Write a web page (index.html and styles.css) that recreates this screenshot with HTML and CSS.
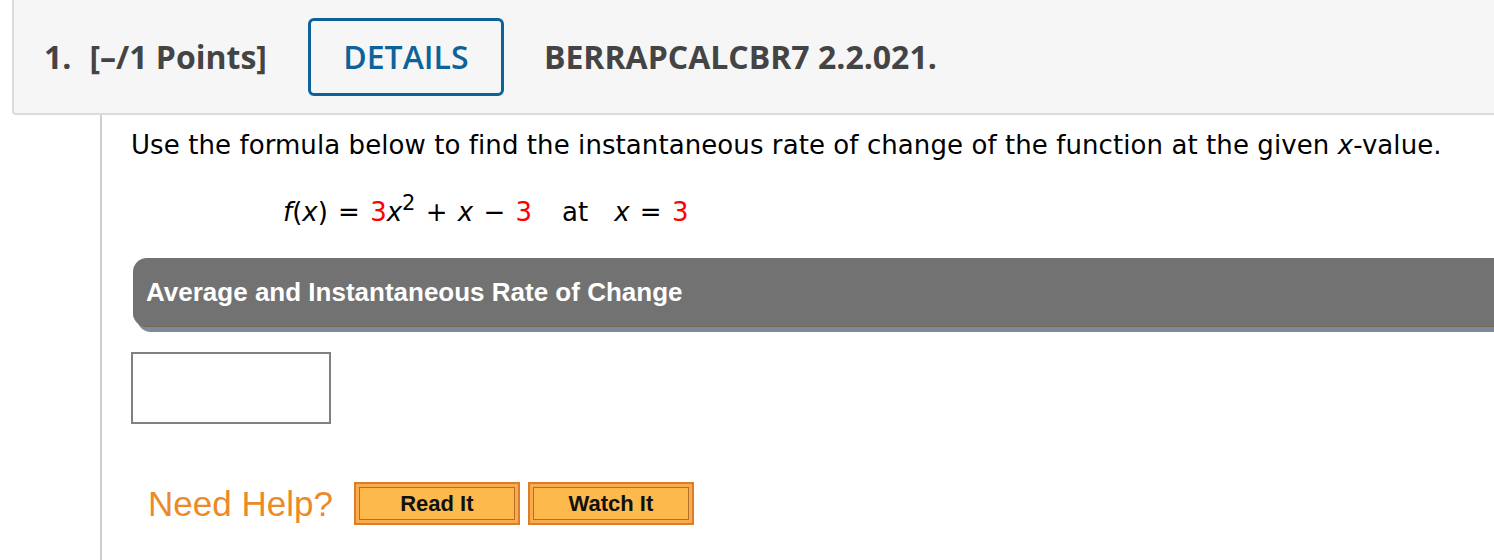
FILE: index.html
```html
<!DOCTYPE html>
<html>
<head>
<meta charset="utf-8">
<link rel="stylesheet" href="styles.css">
</head>
<body>
<div class="header">
  <span class="qnum">1.</span>
  <span class="points">[–/1 Points]</span>
  <span class="details">DETAILS</span>
  <span class="code">BERRAPCALCBR7 2.2.021.</span>
</div>
<div class="content">
  <p class="prompt">Use the formula below to find the instantaneous rate of change of the function at the given <i>x</i>-value.</p>
  <p class="formula"><i>f</i>(<i>x</i>) = <span class="red">3</span><i>x</i><sup>2</sup> + <i>x</i> − <span class="red">3</span><span class="at">at</span><i>x</i> = <span class="red">3</span></p>
  <div class="bar"><span>Average and Instantaneous Rate of Change</span></div>
  <div class="answer"></div>
  <div class="help">
    <span class="need">Need Help?</span>
    <span class="btn">Read It</span>
    <span class="btn">Watch It</span>
  </div>
</div>
</body>
</html>
```
FILE: styles.css
```css
html, body {
  margin: 0;
  padding: 0;
  background: #fff;
}
body {
  width: 1494px;
  height: 560px;
  overflow: hidden;
}
.header {
  margin-left: 12px;
  height: 113px;
  background: #f6f6f6;
  border-left: 2px solid #dcdcdc;
  border-bottom: 2px solid #dcdcdc;
  border-bottom-left-radius: 4px;
  display: flex;
  align-items: center;
  padding-left: 30px;
  box-sizing: content-box;
  font-family: "Open Sans", sans-serif;
  font-weight: 700;
  color: #444;
}
.qnum {
  font-size: 32px;
  margin-right: 18px;
}
.points {
  font-size: 32px;
}
.details {
  margin-left: 41px;
  width: 190px;
  height: 72px;
  border: 3px solid #0d6399;
  border-radius: 6px;
  display: flex;
  align-items: center;
  justify-content: center;
  font-size: 32px;
  font-weight: 600;
  color: #0d6399;
}
.code {
  margin-left: 40px;
  font-size: 32px;
  color: #444;
}
.content {
  margin-left: 100px;
  border-left: 2px solid #cfcfcf;
  padding-left: 29px;
  height: 445px;
  font-family: "DejaVu Sans", Verdana, sans-serif;
  color: #000;
}
.prompt {
  margin: 0;
  padding-top: 15px;
  font-size: 26px;
  line-height: 30px;
  letter-spacing: 0.08px;
}
.formula {
  margin: 0;
  padding-top: 37px;
  padding-left: 152px;
  font-size: 26px;
  line-height: 30px;
  word-spacing: 2px;
}
.formula sup {
  font-size: 21px;
  line-height: 0;
  vertical-align: 11px;
}
.red { color: #f00; }
.at {
  margin: 0 26px 0 30px;
}
.bar {
  margin-top: 31px;
  margin-left: 2px;
  height: 68px;
  background: #727272;
  border-radius: 14px 0 0 14px;
  border-bottom: 1px solid #7a6a55;
  box-shadow: 4px 5px 0 #7a8b9b;
  display: flex;
  align-items: center;
  padding-left: 13px;
  margin-right: -10px;
}
.bar span {
  font-family: "Liberation Sans", Arial, sans-serif;
  font-weight: 700;
  font-size: 26px;
  color: #fff;
}
.answer {
  margin-top: 25px;
  width: 196px;
  height: 68px;
  border: 2px solid #808080;
}
.help {
  margin-top: 58px;
  margin-left: 17px;
  display: flex;
  align-items: center;
}
.need {
  font-family: "Liberation Sans", Arial, sans-serif;
  font-size: 35px;
  color: #ec8a2a;
  margin-right: 21px;
}
.btn {
  width: 148px;
  height: 25px;
  border: 2px solid #d97f2a;
  box-shadow: inset 0 0 0 3px #fbab4c, inset 0 0 0 4px #b0702a;
  padding: 7px 7px;
  background: #fdb94c;
  display: flex;
  align-items: center;
  justify-content: center;
  font-family: "Liberation Sans", Arial, sans-serif;
  font-weight: 700;
  font-size: 22px;
  color: #111;
  margin-right: 8px;
}
```
